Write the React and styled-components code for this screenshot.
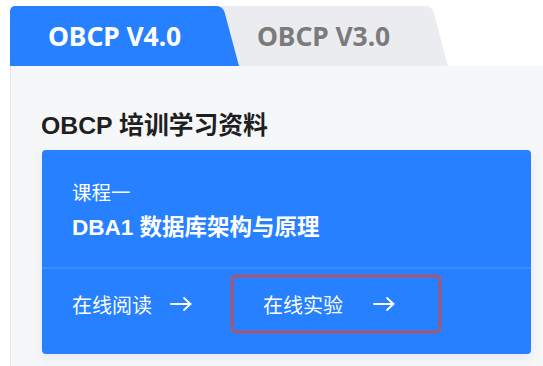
import React from "react";
import styled, { createGlobalStyle } from "styled-components";

const GlobalStyle = createGlobalStyle`
  html, body { margin: 0; padding: 0; background: #ffffff; }
  body { font-family: "Liberation Sans", "Noto Sans CJK SC", sans-serif; }
  * { box-sizing: border-box; }
`;

const Page = styled.div`
  width: 543px;
  height: 366px;
  overflow: hidden;
  background: #ffffff;
`;

const TabBar = styled.div`
  display: flex;
  padding: 6px 0 0 10px;
  height: 66px;
`;

const Tab = styled.div`
  position: relative;
  flex: none;
  height: 60px;
  width: ${(p) => p.$width}px;
  margin-left: ${(p) => p.$offset || 0}px;
  padding-left: ${(p) => p.$pad}px;
  display: flex;
  align-items: center;
  z-index: ${(p) => (p.$active ? 2 : 1)};
  font-family: "Noto Sans", "Noto Sans CJK SC", sans-serif;
  font-weight: 700;
  font-size: 26.5px;
  letter-spacing: -0.1px;
  color: ${(p) => (p.$active ? "#ffffff" : "#7b7b7b")};

  &::before {
    content: "";
    position: absolute;
    top: 0;
    bottom: 0;
    left: 0;
    right: ${(p) => (p.$active ? 30 : 0)}px;
    background: ${(p) => (p.$active ? "#2680ff" : "#ebecf0")};
    border-radius: ${(p) => (p.$active ? "5px 0 0 0" : "6px 6px 0 0")};
    transform: ${(p) => (p.$active ? "none" : "skewX(15deg)")};
    transform-origin: bottom left;
    z-index: -1;
  }

  &::after {
    content: "";
    display: ${(p) => (p.$active ? "block" : "none")};
    position: absolute;
    top: 0;
    bottom: 0;
    left: 20px;
    right: 0;
    background: #2680ff;
    border-radius: 0 6px 0 0;
    transform: skewX(15deg);
    transform-origin: bottom left;
    z-index: -1;
  }
`;

const Panel = styled.div`
  height: 300px;
  margin-left: 10px;
  border-left: 1px solid #e6e7eb;
  background: #f6f7f9;
  padding: 43px 12px 0 31px;
`;

const Heading = styled.h2`
  margin: 0 0 7px -1px;
  font-size: 24.8px;
  line-height: 34px;
  font-weight: 700;
  color: #1f1f1f;
`;

const Card = styled.div`
  width: 489px;
  height: 204px;
  background: #2680ff;
  border-radius: 4px;
  box-shadow: 0 4px 12px rgba(30, 45, 90, 0.08);
  color: #ffffff;
  display: flex;
  flex-direction: column;
`;

const CardTop = styled.div`
  padding: 30px 30px 0 30px;
  height: 119px;
  border-bottom: 2px solid #3a8cff;
  display: flex;
  flex-direction: column;
  gap: 9px;
`;

const Label = styled.div`
  font-family: "Noto Sans CJK SC", sans-serif;
  font-size: 19.5px;
  line-height: 24px;
  font-weight: 400;
`;

const Title = styled.div`
  font-size: 22.5px;
  line-height: 30px;
  font-weight: 700;
`;

const LinkRow = styled.div`
  display: flex;
  align-items: center;
  padding: 6px 0 0 30px;
`;

const LinkItem = styled.a`
  display: flex;
  align-items: center;
  height: 58px;
  border: 2px solid ${(p) => (p.$highlight ? "#e8402c" : "transparent")};
  border-radius: 5px;
  padding: ${(p) => (p.$highlight ? "0 44px 0 30px" : "0")};
  margin-left: ${(p) => (p.$highlight ? 37 : -2)}px;
  gap: ${(p) => (p.$highlight ? 30 : 18)}px;
  font-family: "Noto Sans CJK SC", sans-serif;
  font-size: 20px;
  color: #ffffff;
  text-decoration: none;
  cursor: pointer;
`;

const Arrow = () => (
  <svg width="22" height="14" viewBox="0 0 22 14" fill="none" stroke="#ffffff" strokeWidth="1.8" strokeLinecap="round" strokeLinejoin="round">
    <path d="M1 7H20.5" />
    <path d="M14 1L20.5 7L14 13" />
  </svg>
);

export default function App() {
  return (
    <Page>
      <GlobalStyle />
      <TabBar>
        <Tab $active $width={229} $pad={38}>OBCP V4.0</Tab>
        <Tab $width={219} $offset={-10} $pad={28}>OBCP V3.0</Tab>
      </TabBar>
      <Panel>
        <Heading>OBCP 培训学习资料</Heading>
        <Card>
          <CardTop>
            <Label>课程一</Label>
            <Title>DBA1 数据库架构与原理</Title>
          </CardTop>
          <LinkRow>
            <LinkItem>
              在线阅读
              <Arrow />
            </LinkItem>
            <LinkItem $highlight>
              在线实验
              <Arrow />
            </LinkItem>
          </LinkRow>
        </Card>
      </Panel>
    </Page>
  );
}
